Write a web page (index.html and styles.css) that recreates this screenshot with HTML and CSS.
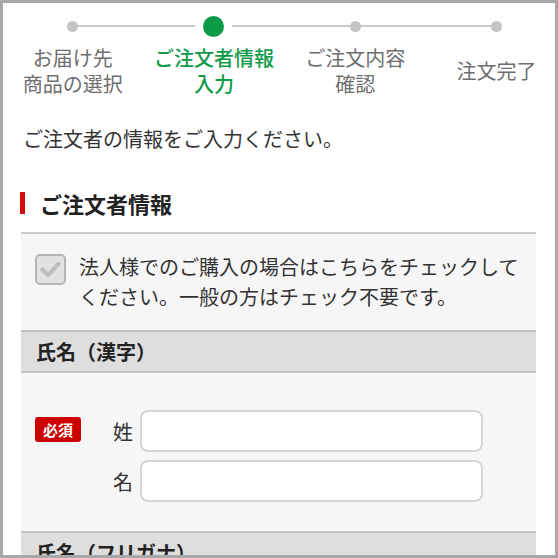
FILE: index.html
```html
<!DOCTYPE html>
<html lang="ja">
<head>
<meta charset="utf-8">
<title>ご注文者情報入力</title>
<link rel="stylesheet" href="styles.css">
</head>
<body>
<div class="frame">
  <ol class="stepper">
    <li class="step">
      <span class="dot-wrap"><span class="dot"></span></span>
      <span class="label">お届け先<br>商品の選択</span>
    </li>
    <li class="step active">
      <span class="dot-wrap"><span class="dot"></span></span>
      <span class="label">ご注文者情報<br>入力</span>
    </li>
    <li class="step">
      <span class="dot-wrap"><span class="dot"></span></span>
      <span class="label">ご注文内容<br>確認</span>
    </li>
    <li class="step">
      <span class="dot-wrap"><span class="dot"></span></span>
      <span class="label">注文完了</span>
    </li>
  </ol>

  <main class="content">
    <p class="lead">ご注文者の情報をご入力ください。</p>
    <h2 class="section-title">ご注文者情報</h2>

    <div class="panel">
      <label class="corp-check">
        <span class="checkbox">
          <svg width="21" height="17" viewBox="0 0 21 17"><path d="M2.5 8.5 L8 14 L18.5 3" fill="none" stroke="#bdbdbd" stroke-width="4.2" stroke-linecap="round" stroke-linejoin="round"/></svg>
        </span>
        <span class="corp-text">法人様でのご購入の場合はこちらをチェックしてください。一般の方はチェック不要です。</span>
      </label>

      <div class="field-head">氏名（漢字）</div>
      <div class="field-body">
        <span class="badge">必須</span>
        <div class="inputs">
          <div class="input-row"><span class="in-label">姓</span><input class="text-input" type="text"></div>
          <div class="input-row"><span class="in-label">名</span><input class="text-input" type="text"></div>
        </div>
      </div>

      <div class="field-head">氏名（フリガナ）</div>
      <div class="field-body">
        <span class="badge">必須</span>
        <div class="inputs">
          <div class="input-row"><span class="in-label">セイ</span><input class="text-input" type="text"></div>
        </div>
      </div>
    </div>
  </main>
</div>
</body>
</html>
```
FILE: styles.css
```css
* { box-sizing: border-box; }
html, body { margin: 0; padding: 0; background: #fff; }
body {
  font-family: "Noto Sans CJK JP", "Noto Sans", sans-serif;
  color: #333;
}
.frame {
  width: 558px;
  height: 558px;
  border: 3px solid #a8a8a8;
  overflow: hidden;
  background: #fff;
}

/* stepper */
.stepper {
  list-style: none;
  margin: 0 0 0 -1px;
  padding: 0;
  display: grid;
  grid-template-columns: repeat(4, 141.3px);
  position: relative;
  width: 566px;
}
.stepper::before {
  content: "";
  position: absolute;
  left: 71px;
  width: 424px;
  top: 22px;
  height: 2px;
  background: #cacaca;
}
.step {
  display: flex;
  flex-direction: column;
  align-items: center;
}
.dot-wrap {
  margin-top: 12px;
  height: 22px;
  display: flex;
  align-items: center;
  justify-content: center;
  position: relative;
}
.dot {
  width: 11px;
  height: 11px;
  border-radius: 50%;
  background: #c4c4c4;
}
.step.active .dot {
  width: 21px;
  height: 21px;
  background: #0e9b48;
  box-shadow: 0 0 0 8px #fff;
}
.label {
  margin-top: 8px;
  height: 52px;
  display: flex;
  align-items: center;
  text-align: center;
  font-size: 20px;
  line-height: 26px;
  color: #6e6e6e;
}
.step.active .label {
  color: #0e9b48;
  font-weight: 500;
}

/* content */
.content {
  padding: 0 19px 0 18px;
}
.lead {
  margin: 27px 0 0 2px;
  font-size: 20px;
  line-height: 30px;
  color: #333;
}
.section-title {
  margin: 38px 0 0 -1px;
  font-size: 22px;
  line-height: 22px;
  font-weight: bold;
  color: #222;
  border-left: 5px solid #d30b0b;
  padding-left: 15px;
}
.panel {
  margin-top: 18px;
  border-top: 2px solid #cbcbcb;
  background: #f6f6f6;
}
.corp-check {
  display: flex;
  align-items: flex-start;
  gap: 13px;
  padding: 20px 14px 18px 14px;
}
.checkbox {
  flex: none;
  width: 31px;
  height: 31px;
  border: 2px solid #b4b4b4;
  border-radius: 5px;
  background: #e2e2e2;
  display: flex;
  align-items: center;
  justify-content: center;
}
.corp-text {
  margin-top: -2px;
  font-size: 20px;
  line-height: 30px;
  color: #333;
}
.field-head {
  border-top: 2px solid #c4c4c4;
  border-bottom: 2px solid #c4c4c4;
  background: #dedede;
  height: 43px;
  padding-left: 15px;
  font-size: 20px;
  line-height: 39px;
  font-weight: bold;
  color: #222;
}
.field-body {
  display: flex;
  align-items: flex-start;
  padding: 37px 53px 29px 14px;
}
.badge {
  flex: none;
  margin-top: 7px;
  width: 46px;
  height: 25px;
  border-radius: 3px;
  background: #cc0000;
  color: #fff;
  font-size: 15px;
  font-weight: bold;
  line-height: 25px;
  text-align: center;
}
.inputs {
  flex: 1;
  display: flex;
  flex-direction: column;
  gap: 8px;
}
.input-row {
  display: flex;
  align-items: center;
}
.in-label {
  flex: 1;
  text-align: right;
  padding-right: 7px;
  font-size: 20px;
  color: #333;
}
.text-input {
  width: 343px;
  height: 42px;
  border: 2px solid #d6d6d6;
  border-radius: 8px;
  background: #fff;
  margin: 0;
  padding: 0 10px;
  font: inherit;
}
```
